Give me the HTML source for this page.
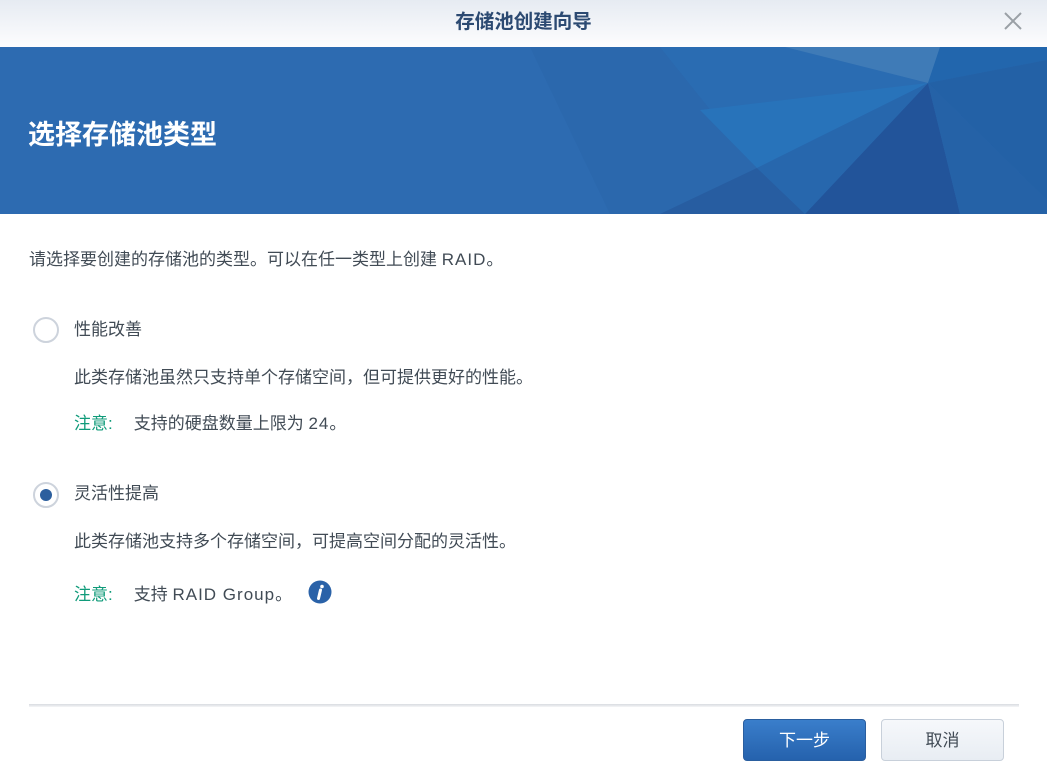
<!DOCTYPE html>
<html><head><meta charset="utf-8"><style>
*{margin:0;padding:0;box-sizing:border-box}
body{width:1047px;height:769px;background:#fff;font-family:"Liberation Sans","Noto Sans CJK SC",sans-serif;position:relative;overflow:hidden;color:#414b55}
.hdr{position:absolute;left:0;top:0;width:1047px;height:47px;background:linear-gradient(#e6ebf2,#fdfdfe);text-align:center;line-height:45px;font-size:19.5px;font-weight:bold;color:#2c4a72}
.x{position:absolute;right:24px;top:11px;width:20px;height:20px}
.banner{position:absolute;left:0;top:47px;width:1047px;height:167px;background:#2d6bb1;overflow:hidden}
.banner h1{position:absolute;left:28px;top:66px;color:#fff;font-size:27px;font-weight:bold}
.t{position:absolute;font-size:17px;white-space:nowrap;line-height:20px}
.g{color:#109b7a;margin-right:21px}
.l{letter-spacing:1px}
.radio{position:absolute;width:26px;height:26px;border-radius:50%;border:2px solid #cdd3dc;background:#fff}
.radio.on::after{content:"";position:absolute;left:5px;top:5px;width:12px;height:12px;border-radius:50%;background:#2c5f9e}
.line{position:absolute;left:29px;top:704px;width:990px;height:3px;background:linear-gradient(#d8dbe0,#f4f5f7)}
.btn{position:absolute;top:719px;width:123px;height:42px;border-radius:4px;text-align:center;line-height:41px;font-size:17px}
</style></head><body>
<div class="hdr">存储池创建向导
<svg class="x" viewBox="0 0 20 20"><path d="M2 2L18 18M18 2L2 18" stroke="#9aa0a6" stroke-width="2"/></svg></div>
<div class="banner">
<svg width="1047" height="167" style="position:absolute;left:0;top:0" viewBox="0 47 1047 167">
<polygon points="530,47 660,47 757,168 800,214 610,214" fill="#2b68ad"/>
<polygon points="660,47 785,47 928,83 757,168" fill="#2a6cb2"/>
<polygon points="700,110 928,83 757,168" fill="#2873ba"/>
<polygon points="785,47 940,47 928,83" fill="#3f7bb7"/>
<polygon points="940,47 1047,47 1047,60 928,83" fill="#2266ad"/>
<polygon points="928,83 1047,60 1047,200" fill="#2361a6"/>
<polygon points="928,83 805,214 960,214" fill="#22549a"/>
<polygon points="757,168 660,214 805,214" fill="#275da1"/>
<polygon points="757,168 928,83 805,214" fill="#2767ad"/>
<polygon points="928,83 1047,200 1047,214 960,214" fill="#2562a7"/>
</svg>
<h1>选择存储池类型</h1></div>
<div class="t" style="left:29px;top:250px">请选择要创建的存储池的类型。可以在任一类型上创建 <span class="l">RAID</span>。</div>
<div class="radio" style="left:33px;top:317px"></div>
<div class="t" style="left:74px;top:320px">性能改善</div>
<div class="t" style="left:74px;top:368px">此类存储池虽然只支持单个存储空间，但可提供更好的性能。</div>
<div class="t" style="left:74px;top:414px"><span class="g">注意:</span>支持的硬盘数量上限为 <span class="l">24</span>。</div>
<div class="radio on" style="left:33px;top:482px"></div>
<div class="t" style="left:74px;top:484px">灵活性提高</div>
<div class="t" style="left:74px;top:532px">此类存储池支持多个存储空间，可提高空间分配的灵活性。</div>
<div class="t" style="left:74px;top:585px"><span class="g">注意:</span>支持 <span class="l">RAID Group</span>。</div>
<svg style="position:absolute;left:308px;top:580px" width="24" height="24" viewBox="0 0 24 24"><circle cx="12" cy="12" r="11.5" fill="#2a62a8"/><circle cx="14" cy="6.5" r="1.8" fill="#fff"/><path d="M12.5 10 L10.5 18.5" stroke="#fff" stroke-width="3" stroke-linecap="round"/></svg>
<div class="line"></div>
<div class="btn" style="left:743px;background:linear-gradient(#3a7ecb,#2562ad);border:1px solid #2a5e9f;color:#fff">下一步</div>
<div class="btn" style="left:881px;background:linear-gradient(#f6f8fb,#e8edf3);border:1px solid #c8d0da;color:#414b55">取消</div>
</body></html>
